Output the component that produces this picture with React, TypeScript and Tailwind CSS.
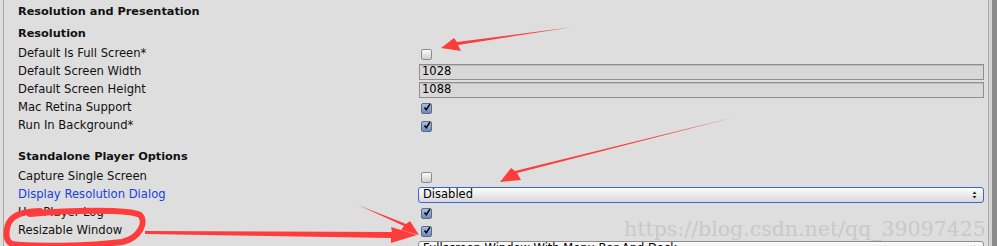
import React from 'react';

const font = { fontFamily: '"DejaVu Sans", Verdana, sans-serif' };

const Checkbox: React.FC<{ checked?: boolean }> = ({ checked }) => (
  <div
    className={`ml-[2px] w-[11px] h-[11px] rounded-[2px] border flex items-center justify-center ${
      checked
        ? 'border-[#5a6c8a] bg-gradient-to-b from-[#a9bedf] to-[#6f8bb8]'
        : 'border-[#8c8c8c] bg-gradient-to-b from-[#fbfbfb] to-[#cfcfcf]'
    }`}
  >
    {checked && (
      <svg width="11" height="11" viewBox="0 0 11 11" className="-mt-[2px] ml-[1px]">
        <path d="M2 5.5 L4.5 8.5 L9.5 1" fill="none" stroke="#000" strokeWidth="2" />
      </svg>
    )}
  </div>
);

const TextField: React.FC<{ value: string }> = ({ value }) => (
  <div className="w-full h-[16px] border border-[#8f8f8f] bg-[#d8d8d8] shadow-[inset_0_1px_0_#bdbdbd] flex items-center pl-[2px] text-[11.5px] text-black">
    {value}
  </div>
);

const Dropdown: React.FC<{ value: string; focus?: boolean }> = ({ value, focus }) => (
  <div
    className={`-ml-px w-[calc(100%+1px)] h-[16px] rounded-[3px] border flex items-center justify-between pl-[4px] pr-[6px] text-[11.5px] text-black bg-gradient-to-b from-[#fdfdfd] to-[#d9d9d9] ${
      focus ? 'border-[#3b64e0]' : 'border-[#8c8c8c]'
    }`}
  >
    <span>{value}</span>
    <svg width="5" height="8" viewBox="0 0 5 8">
      <path d="M0.5 3 L2.5 0.5 L4.5 3 Z M0.5 5 L2.5 7.5 L4.5 5 Z" fill="#222" />
    </svg>
  </div>
);

type Row = { label: string; control: React.ReactNode; blue?: boolean };

const Field: React.FC<Row> = ({ label, control, blue }) => (
  <div className="flex items-center h-[18px]">
    <div className={`w-[401px] shrink-0 text-[11.6px] ${blue ? 'text-[#1a3ee0]' : 'text-[#111]'}`}>{label}</div>
    <div className="flex-1 flex items-center">{control}</div>
  </div>
);

const Heading: React.FC<{ children: React.ReactNode; className?: string }> = ({ children, className }) => (
  <div className={`h-[18px] flex items-center text-[11.3px] font-bold text-[#111] ${className ?? ''}`}>{children}</div>
);

export default function App() {
  const resolution: Row[] = [
    { label: 'Default Is Full Screen*', control: <Checkbox /> },
    { label: 'Default Screen Width', control: <TextField value="1028" /> },
    { label: 'Default Screen Height', control: <TextField value="1088" /> },
    { label: 'Mac Retina Support', control: <Checkbox checked /> },
    { label: 'Run In Background*', control: <Checkbox checked /> },
  ];
  const standalone: Row[] = [
    { label: 'Capture Single Screen', control: <Checkbox /> },
    { label: 'Display Resolution Dialog', control: <Dropdown value="Disabled" focus />, blue: true },
    { label: 'Use Player Log', control: <Checkbox checked /> },
    { label: 'Resizable Window', control: <Checkbox checked /> },
    { label: 'Fullscreen Mode', control: <Dropdown value="Fullscreen Window With Menu Bar And Dock" /> },
  ];

  return (
    <div className="relative w-[997px] h-[246px] overflow-hidden bg-[#dedede] flex" style={font}>
      <div className="w-[3px] shrink-0" />
      <div className="w-px shrink-0 bg-[#a8a8a8]" />
      <div className="flex-1 pl-[14px] pt-[3px]">
        <Heading>Resolution and Presentation</Heading>
        <Heading className="mt-[4px]">Resolution</Heading>
        <div className="mt-[2px]">
          {resolution.map((r) => (
            <Field key={r.label} {...r} />
          ))}
        </div>
        <Heading className="mt-[13px]">Standalone Player Options</Heading>
        <div className="mt-[2px]">
          {standalone.map((r) => (
            <Field key={r.label} {...r} />
          ))}
        </div>
      </div>
      <div className="w-[4px] shrink-0" />
      <div className="w-px shrink-0 bg-[#a8a8a8]" />
      <div className="w-[3px] shrink-0 bg-[#d4d4d4]" />
      <div className="w-[5px] shrink-0 bg-[#8a8a8a]" />

      <div
        className="absolute left-[624px] top-[214px] text-[20.5px] text-[#c9c9c9] pointer-events-none"
        style={{ fontFamily: '"DejaVu Serif", "Liberation Serif", serif' }}
      >
        https://blog.csdn.net/qq_39097425
      </div>

      <svg className="absolute inset-0 pointer-events-none" width="997" height="246" viewBox="0 0 997 246">
        <g fill="#ff3b3b">
          <polygon points="573,27 458,45 461,51 441,48 454,38 457,42" />
          <polygon points="735,117 517,173 521,180 500,182 511,168 515,171" />
          <polygon points="358,205 404,226 401,230 419,235 410,221 406,224" />
          <polygon points="145,231 392,232 391,227 417,235 391,243 391,238 145,234" />
        </g>
        <path
          d="M30 214 C70 210 130 209 140 215 C147 222 140 238 122 242 C90 246 30 247 12 244 C3 240 6 222 14 217 C20 213 28 211 40 211"
          fill="none"
          stroke="#ff3b3b"
          strokeWidth="6"
          strokeLinecap="round"
        />
      </svg>
    </div>
  );
}
